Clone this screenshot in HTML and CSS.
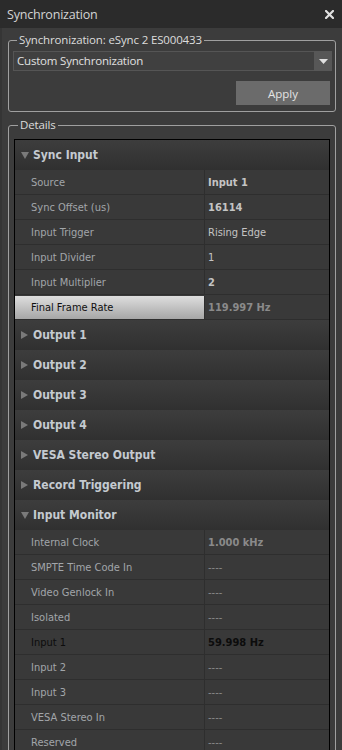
FILE: index.html
```html
<!DOCTYPE html>
<html>
<head>
<meta charset="utf-8">
<link rel="stylesheet" href="styles.css">
</head>
<body>
<div class="window">
  <div class="titlebar">
    <span class="title">Synchronization</span>
    <svg class="close" width="9" height="9" viewBox="0 0 9 9"><path d="M1 1 L8 8 M8 1 L1 8" stroke="#e0e0e0" stroke-width="2.2" stroke-linecap="square"/></svg>
  </div>
  <div class="content">
    <fieldset class="group sync-group">
      <legend>Synchronization: eSync 2 ES000433</legend>
      <div class="dropdown">
        <span class="dd-text">Custom Synchronization</span>
        <span class="dd-btn"><svg width="9" height="5" viewBox="0 0 9 5"><path d="M0 0 H9 L4.5 5 Z" fill="#e0e0e0"/></svg></span>
      </div>
      <div class="btn-row"><button class="apply">Apply</button></div>
    </fieldset>
    <fieldset class="group details">
      <legend>Details</legend>
      <div class="table">
        <div class="hdr"><span class="tri down"></span><span>Sync Input</span></div>
        <div class="row"><div class="lbl">Source</div><div class="val b">Input 1</div></div>
        <div class="row"><div class="lbl">Sync Offset (us)</div><div class="val b">16114</div></div>
        <div class="row"><div class="lbl">Input Trigger</div><div class="val">Rising Edge</div></div>
        <div class="row"><div class="lbl">Input Divider</div><div class="val">1</div></div>
        <div class="row"><div class="lbl">Input Multiplier</div><div class="val b">2</div></div>
        <div class="row"><div class="lbl sel">Final Frame Rate</div><div class="val b dim">119.997 Hz</div></div>
        <div class="hdr"><span class="tri right"></span><span>Output 1</span></div>
        <div class="hdr"><span class="tri right"></span><span>Output 2</span></div>
        <div class="hdr"><span class="tri right"></span><span>Output 3</span></div>
        <div class="hdr"><span class="tri right"></span><span>Output 4</span></div>
        <div class="hdr"><span class="tri right"></span><span>VESA Stereo Output</span></div>
        <div class="hdr"><span class="tri right"></span><span>Record Triggering</span></div>
        <div class="hdr"><span class="tri down"></span><span>Input Monitor</span></div>
        <div class="row"><div class="lbl">Internal Clock</div><div class="val b dim">1.000 kHz</div></div>
        <div class="row"><div class="lbl">SMPTE Time Code In</div><div class="val dash">----</div></div>
        <div class="row"><div class="lbl">Video Genlock In</div><div class="val dash">----</div></div>
        <div class="row"><div class="lbl">Isolated</div><div class="val dash">----</div></div>
        <div class="row"><div class="lbl dark">Input 1</div><div class="val b dark">59.998 Hz</div></div>
        <div class="row"><div class="lbl">Input 2</div><div class="val dash">----</div></div>
        <div class="row"><div class="lbl">Input 3</div><div class="val dash">----</div></div>
        <div class="row"><div class="lbl">VESA Stereo In</div><div class="val dash">----</div></div>
        <div class="row"><div class="lbl">Reserved</div><div class="val dash">----</div></div>
      </div>
    </fieldset>
  </div>
</div>
</body>
</html>
```
FILE: styles.css
```css
html, body {
  margin: 0;
  padding: 0;
  background: #3c3c3c;
  overflow: hidden;
}
.window {
  width: 342px;
  height: 750px;
  overflow: hidden;
  font-family: "DejaVu Sans Condensed", "DejaVu Sans", sans-serif;
  font-size: 11px;
  color: #d0d0d0;
}
.titlebar {
  height: 28px;
  background: #2b2b2b;
  display: flex;
  align-items: center;
  justify-content: space-between;
  padding: 1px 8px 0 7px;
  box-sizing: border-box;
}
.title {
  font-family: "Open Sans", "Liberation Sans", sans-serif;
  font-size: 12.5px;
  color: #d4d4d4;
  letter-spacing: -0.2px;
}
.content {
  border-left: 2px solid #353535;
  padding: 5px 6px 0 6px;
}
.group {
  margin: 0;
  border: 1px solid #a0a0a0;
  border-radius: 3px;
  min-width: 0;
}
.group legend {
  font-family: "Open Sans", "Liberation Sans", sans-serif;
  font-size: 11.5px;
  line-height: 14px;
  color: #dcdcdc;
  padding: 0 2px;
  margin-left: 4px;
  letter-spacing: -0.15px;
}
.sync-group {
  padding: 4px 3px 6px 4px;
}
.dropdown {
  height: 20px;
  display: flex;
  background: #404040;
  border: 1px solid #555;
  box-sizing: border-box;
}
.dd-text {
  flex: 1;
  padding-left: 3px;
  line-height: 18px;
  font-family: "Open Sans", "Liberation Sans", sans-serif;
  font-size: 11.5px;
  color: #e0e0e0;
  letter-spacing: -0.2px;
}
.dd-btn {
  width: 18px;
  background: #575757;
  display: flex;
  align-items: center;
  justify-content: center;
  margin: -1px -1px -1px 0;
}
.btn-row {
  display: flex;
  justify-content: flex-end;
  padding-top: 10px;
  padding-right: 2px;
}
.apply {
  width: 94px;
  height: 24px;
  background: #6b6b6b;
  border: none;
  color: #e4e4e4;
  font-family: "Open Sans", "Liberation Sans", sans-serif;
  font-size: 11.5px;
  padding: 0;
}
.details {
  margin-top: 6px;
  padding: 7px 5px 0 5px;
  height: 700px;
}
.table {
  border: 1px solid #000;
  background: #393939;
}
.hdr {
  height: 30px;
  display: flex;
  align-items: center;
  background: linear-gradient(#3d3d3d, #303030);
  font-weight: bold;
  font-size: 12px;
  color: #c4cad0;
}
.tri {
  width: 16px;
  margin-left: 2px;
  display: flex;
  justify-content: center;
}
.tri.down::before {
  content: "";
  border-left: 4px solid transparent;
  border-right: 4px solid transparent;
  border-top: 7px solid #7a7a7a;
}
.tri.right::before {
  content: "";
  border-top: 4px solid transparent;
  border-bottom: 4px solid transparent;
  border-left: 7px solid #7a7a7a;
  margin-left: -1px;
}
.row {
  height: 25px;
  display: flex;
  border-bottom: 1px solid #2e2e2e;
  box-sizing: border-box;
}
.lbl {
  width: 190px;
  box-sizing: border-box;
  border-right: 1px solid #2e2e2e;
  padding-left: 16px;
  display: flex;
  align-items: center;
  color: #a2a6aa;
}
.lbl.sel {
  background: linear-gradient(#dedede, #a6a6a6);
  color: #101010;
  margin-top: 1px;
}
.val {
  flex: 1;
  padding-left: 3px;
  display: flex;
  align-items: center;
  color: #c4c4c4;
}
.b { font-weight: bold; }
.dim { color: #8a8a8a; }
.dash { color: #8a8a8a; }
.lbl.dark, .val.dark { color: #0c0c0c; }
```
